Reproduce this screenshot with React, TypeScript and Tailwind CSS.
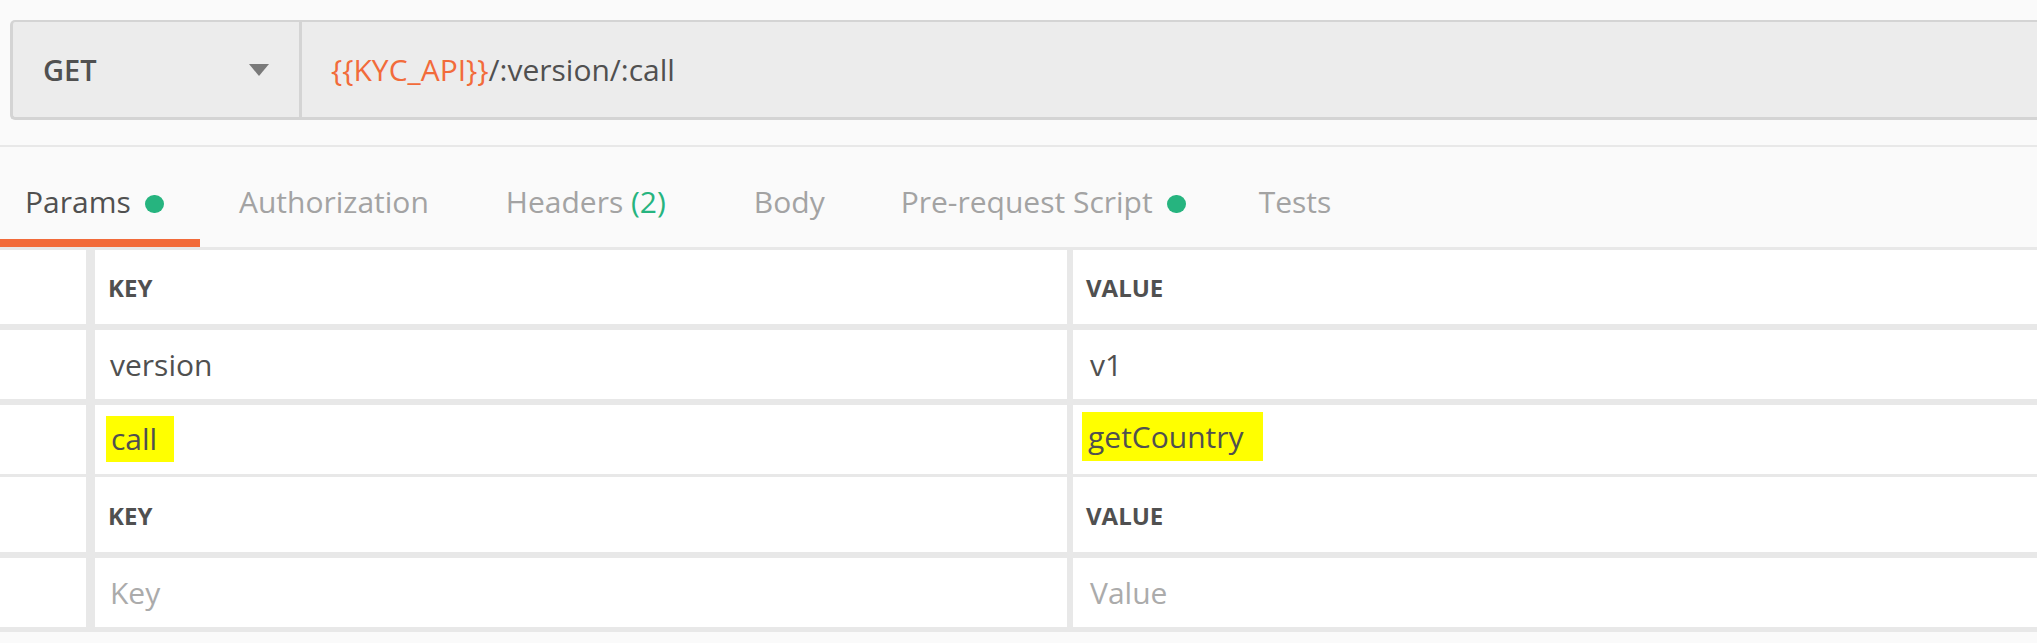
import React from 'react'

const font = { fontFamily: '"Open Sans", "Liberation Sans", sans-serif' }

function Dot() {
    return <span className="inline-block w-[19px] h-[18px] rounded-full bg-[#26b47f] ml-[14px] mt-[4px]" />
}

function Cell({ children, wide }: { children?: React.ReactNode; wide?: boolean }) {
    return (
        <div className={`${wide ? 'w-[972px] mr-[6px]' : 'flex-1'} bg-white flex items-center pl-[13px]`}>
            {children}
        </div>
    )
}

function Row({ h, mb, children }: { h: string; mb: string; children: React.ReactNode }) {
    return (
        <div className={`flex ${h} ${mb}`}>
            <div className="w-[86px] mr-[9px] bg-white" />
            {children}
        </div>
    )
}

export default function App() {
    return (
        <div className="w-[2037px] h-[643px] bg-[#fafafa] overflow-hidden text-[#505050]" style={font}>
            {/* URL bar */}
            <div className="pt-[20px] pl-[10px]">
                <div className="flex h-[100px] bg-[#ececec] border-t-2 border-b-[3px] border-l-[3px] border-[#d4d4d4] rounded-l-[5px]">
                    <div className="w-[289px] flex items-center justify-between pl-[30px] pr-[30px] border-r-[3px] border-[#d4d4d4]">
                        <span className="text-[29px] font-semibold">GET</span>
                        <svg width="20" height="12" viewBox="0 0 20 12">
                            <path d="M0 0 L20 0 L10 12 Z" fill="#7a7a7a" />
                        </svg>
                    </div>
                    <div className="flex items-center pl-[29px] text-[30px]">
                        <span className="text-[#f26b3a]">{'{{KYC_API}}'}</span>
                        <span>/:version/:call</span>
                    </div>
                </div>
            </div>

            {/* Tabs */}
            <div className="mt-[25px] border-t-2 border-[#e8e8e8]">
                <div className="flex h-[92px] items-center text-[30px] text-[#a3a3a3] pt-[17px]">
                    <div className="w-[200px] pl-[25px] flex items-center text-[#505050]">
                        Params <Dot />
                    </div>
                    <span className="ml-[39px]">Authorization</span>
                    <span className="ml-[77px]">
                        Headers <span className="text-[#26b47f]">(2)</span>
                    </span>
                    <span className="ml-[88px]">Body</span>
                    <span className="ml-[76px] flex items-center">
                        Pre-request Script <Dot />
                    </span>
                    <span className="ml-[73px]">Tests</span>
                </div>
                <div className="w-[200px] h-[8px] bg-[#f26b3a]" />
            </div>

            {/* Params table */}
            <div className="bg-[#e8e8e8] pt-[3px] pb-[5px] text-[30px]">
                <Row h="h-[74px]" mb="mb-[6px]">
                    <Cell wide><span className="text-[24px] font-bold pt-[2px]">KEY</span></Cell>
                    <Cell><span className="text-[24px] font-bold pt-[2px]">VALUE</span></Cell>
                </Row>
                <Row h="h-[69px]" mb="mb-[6px]">
                    <Cell wide><span className="pl-[2px]">version</span></Cell>
                    <Cell><span className="pl-[4px]">v1</span></Cell>
                </Row>
                <Row h="h-[69px]" mb="mb-[3px]">
                    <Cell wide>
                        <span className="bg-[#ffff00] pl-[5px] pr-[17px] leading-[46px] -ml-[2px] mb-[2px]">call</span>
                    </Cell>
                    <Cell>
                        <span className="bg-[#ffff00] pl-[6px] pr-[19px] leading-[49px] -ml-[4px] mb-[6px]">getCountry</span>
                    </Cell>
                </Row>
                <Row h="h-[75px]" mb="mb-[6px]">
                    <Cell wide><span className="text-[24px] font-bold pt-[2px]">KEY</span></Cell>
                    <Cell><span className="text-[24px] font-bold pt-[2px]">VALUE</span></Cell>
                </Row>
                <Row h="h-[69px]" mb="mb-0">
                    <Cell wide><span className="pl-[2px] text-[#ababab]">Key</span></Cell>
                    <Cell><span className="pl-[4px] text-[#ababab]">Value</span></Cell>
                </Row>
            </div>
        </div>
    )
}
